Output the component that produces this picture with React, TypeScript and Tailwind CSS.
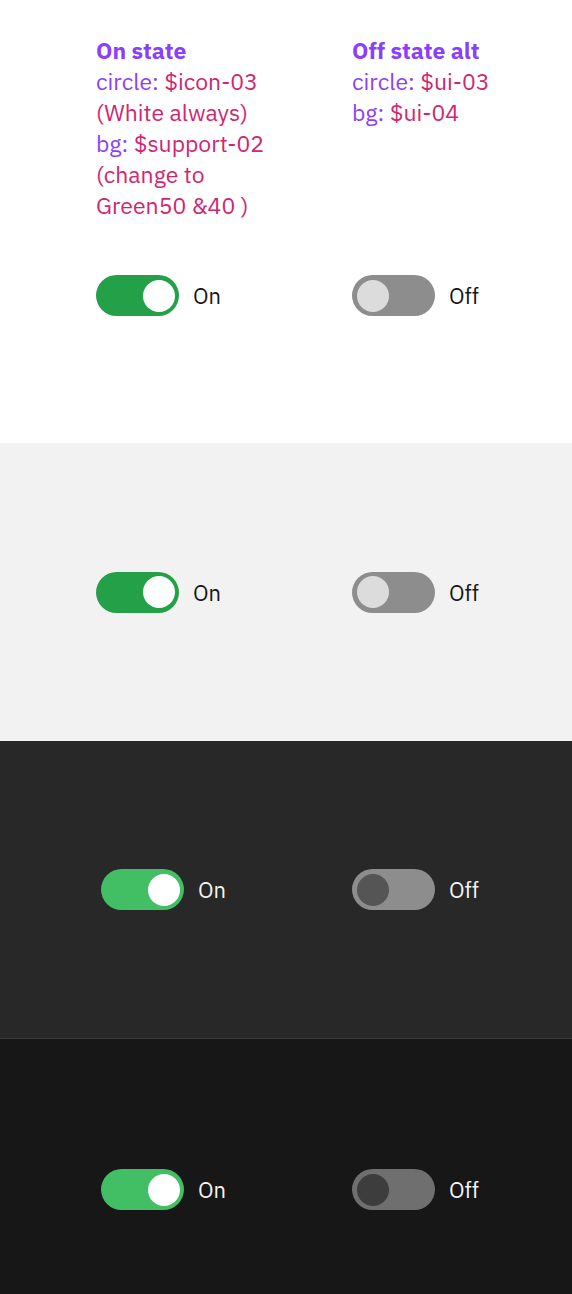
import React from 'react';

type Tone = 'light' | 'dark' | 'darkest';

const font = { fontFamily: '"IBM Plex Sans", "Noto Sans", sans-serif' };

function Toggle({ on, tone }: { on: boolean; tone: Tone }) {
  const track = on
    ? tone === 'light'
      ? 'bg-[#24a148] justify-end'
      : 'bg-[#42be65] justify-end'
    : tone === 'darkest'
      ? 'bg-[#6f6f6f] justify-start'
      : 'bg-[#8d8d8d] justify-start';
  const knob = on
    ? 'bg-white'
    : tone === 'light'
      ? 'bg-[#dcdcdc]'
      : tone === 'dark'
        ? 'bg-[#555555]'
        : 'bg-[#3d3d3d]';
  return (
    <div className={`flex items-center w-[83px] h-[41px] rounded-full p-[4.5px] ${track}`}>
      <div className={`w-[32px] h-[32px] rounded-full ${knob}`} />
    </div>
  );
}

function ToggleRow({ tone }: { tone: Tone }) {
  const text = tone === 'light' ? 'text-[#161616]' : 'text-[#f4f4f4]';
  const shift = tone === 'light' ? 'pl-[96px]' : 'pl-[101px]';
  return (
    <div className="grid grid-cols-[256px_1fr]">
      <div className={`flex items-center gap-[14px] ${shift}`}>
        <Toggle on tone={tone} />
        <span className={`text-[22px] ${text}`}>On</span>
      </div>
      <div className="flex items-center gap-[14px] pl-[96px]">
        <Toggle on={false} tone={tone} />
        <span className={`text-[22px] ${text}`}>Off</span>
      </div>
    </div>
  );
}

export default function App() {
  return (
    <div className="w-[572px] h-[1294px] overflow-hidden" style={font}>
      <section className="bg-white h-[443px] pt-[35px]">
        <div className="grid grid-cols-[256px_1fr] text-[23px] leading-[31px] h-[240px] whitespace-nowrap">
          <div className="pl-[96px]">
            <div className="font-bold text-[#8a3ffc]">On state</div>
            <div className="text-[#d02670]">
              <span className="text-[#8a3ffc]">circle:</span> $icon-03
            </div>
            <div className="text-[#d02670]">(White always)</div>
            <div className="text-[#d02670]">
              <span className="text-[#8a3ffc]">bg:</span> $support-02
            </div>
            <div className="text-[#d02670]">(change to</div>
            <div className="text-[#d02670]">Green50 &amp;40 )</div>
          </div>
          <div className="pl-[96px]">
            <div className="font-bold text-[#8a3ffc]">Off state alt</div>
            <div className="text-[#d02670]">
              <span className="text-[#8a3ffc]">circle:</span> $ui-03
            </div>
            <div className="text-[#d02670]">
              <span className="text-[#8a3ffc]">bg:</span> $ui-04
            </div>
          </div>
        </div>
        <ToggleRow tone="light" />
      </section>
      <section className="bg-[#f2f2f2] h-[298px] flex flex-col justify-center">
        <ToggleRow tone="light" />
      </section>
      <section className="bg-[#282828] h-[298px] flex flex-col justify-center border-b border-[#3a3a3a]">
        <ToggleRow tone="dark" />
      </section>
      <section className="bg-[#171717] h-[255px] pt-[130px]">
        <ToggleRow tone="darkest" />
      </section>
    </div>
  );
}
